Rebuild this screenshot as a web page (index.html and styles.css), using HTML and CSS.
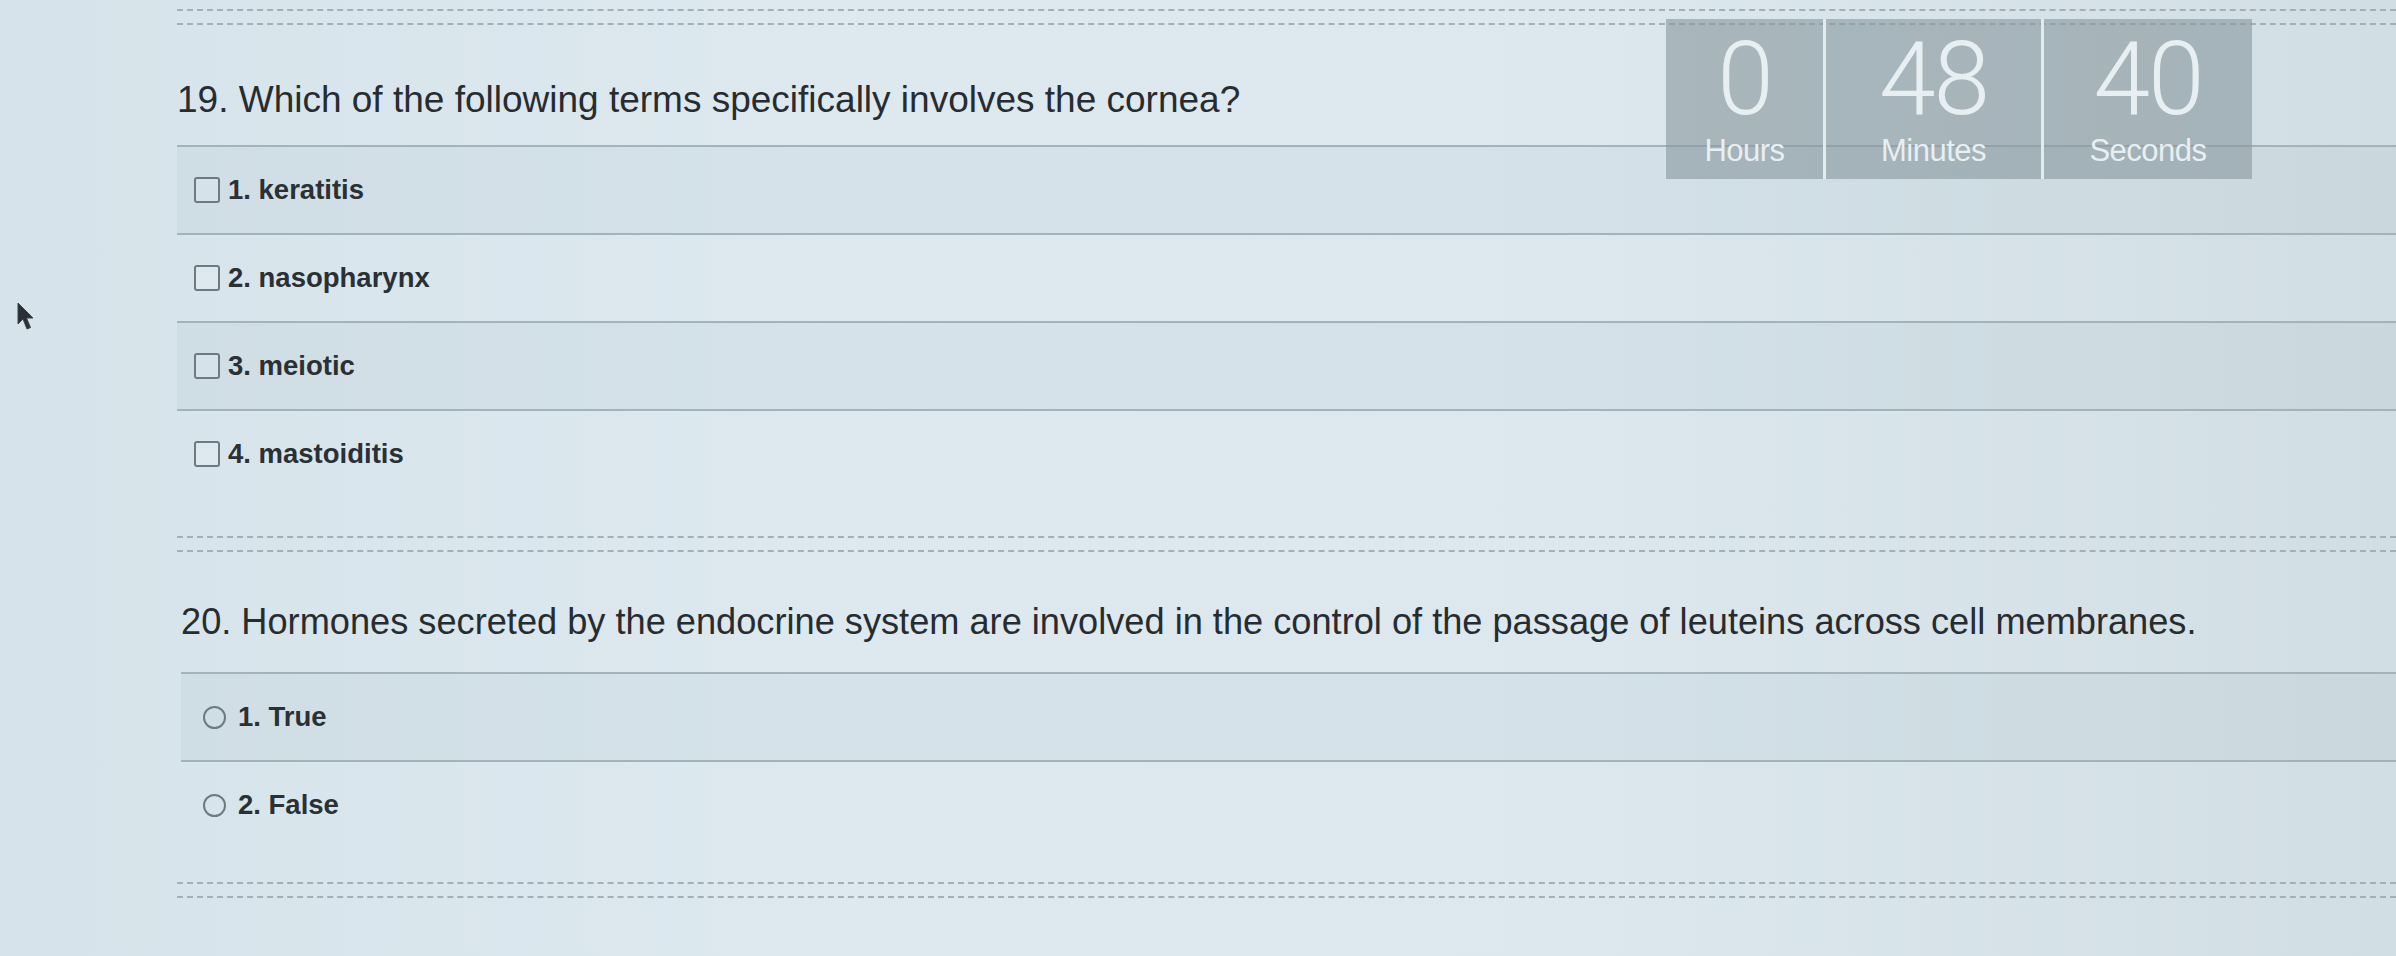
FILE: index.html
```html
<!DOCTYPE html>
<html lang="en">
<head>
<meta charset="utf-8">
<title>Quiz</title>
<link rel="stylesheet" href="styles.css">
</head>
<body>
<main class="quiz">
  <div class="sep"></div>
  <section class="question">
    <h2 class="q-title">19. Which of the following terms specifically involves the cornea?</h2>
    <ul class="options">
      <li class="option shaded"><span class="box"></span>1. keratitis</li>
      <li class="option"><span class="box"></span>2. nasopharynx</li>
      <li class="option shaded"><span class="box"></span>3. meiotic</li>
      <li class="option"><span class="box"></span>4. mastoiditis</li>
    </ul>
  </section>
  <div class="sep"></div>
  <section class="question q-tf">
    <h2 class="q-title">20. Hormones secreted by the endocrine system are involved in the control of the passage of leuteins across cell membranes.</h2>
    <ul class="options">
      <li class="option radio-opt shaded"><span class="radio"></span>1. True</li>
      <li class="option radio-opt"><span class="radio"></span>2. False</li>
    </ul>
  </section>
  <div class="sep"></div>
</main>

<div class="timer">
  <div class="cell cell-h"><span class="num">0</span><span class="lbl">Hours</span></div>
  <div class="cell cell-m"><span class="num">48</span><span class="lbl">Minutes</span></div>
  <div class="cell cell-s"><span class="num">40</span><span class="lbl">Seconds</span></div>
</div>

<svg class="cursor" width="20" height="30" viewBox="0 0 20 30">
  <path d="M1 1 L1 22 L6 17 L10 27 L13.5 25.5 L9.5 16 L16 16 Z" fill="#2a3036" stroke="#3b434a" stroke-width="1"/>
</svg>
</body>
</html>
```

FILE: styles.css
```css
* { box-sizing: border-box; }

html, body {
  margin: 0;
  padding: 0;
}

body {
  width: 2396px;
  height: 956px;
  overflow: hidden;
  background: linear-gradient(90deg, #d6e3ea 0%, #dde9ef 35%, #dce8ee 65%, #d1dee4 100%);
  font-family: "Liberation Sans", Arial, sans-serif;
  color: #2b3034;
  position: relative;
}

.quiz {
  margin-left: 177px;
  padding-top: 9px;
}

.sep {
  height: 16px;
  border-top: 2px dashed #a2b1b8;
  border-bottom: 2px dashed #a2b1b8;
}

.question {
  margin-bottom: 39px;
}

.q-tf {
  margin-bottom: 34px;
  padding-left: 4px;
}

.q-title {
  margin: 0;
  font-size: 37px;
  font-weight: normal;
  line-height: 40px;
  padding-bottom: 25px;
  border-bottom: 2px solid #a3b3ba;
  color: #272c30;
}

.question:first-of-type .q-title {
  padding-top: 55px;
}

.q-tf .q-title {
  font-size: 36.2px;
  padding-top: 50px;
  padding-bottom: 30px;
}

.options {
  list-style: none;
  margin: 0;
  padding: 0;
}

.option {
  height: 88px;
  display: flex;
  align-items: center;
  padding-left: 17px;
  font-size: 27.5px;
  font-weight: bold;
  border-bottom: 2px solid #a3b3ba;
  color: #2a3034;
}

.option:last-child {
  border-bottom: none;
  height: 86px;
}

.option.shaded {
  background: rgba(120, 140, 150, 0.07);
}

.radio-opt {
  padding-left: 22px;
}

.box {
  width: 26px;
  height: 26px;
  border: 2px solid #6f7a80;
  border-radius: 3px;
  margin-right: 8px;
  flex: none;
  background: rgba(255, 255, 255, 0.15);
}

.radio {
  width: 23px;
  height: 23px;
  border: 2px solid #6f7a80;
  border-radius: 50%;
  margin-right: 12px;
  flex: none;
}

.timer {
  position: absolute;
  left: 1666px;
  top: 19px;
  height: 160px;
  display: flex;
}

.cell {
  height: 160px;
  display: flex;
  flex-direction: column;
  align-items: center;
  background: rgba(135, 150, 157, 0.6);
  color: #e8eff2;
  padding-top: 14px;
}

.cell-h { width: 157px; }
.cell-m { width: 218px; border-left: 3px solid #e3ebef; }
.cell-s { width: 211px; border-left: 3px solid #e3ebef; }

.num {
  font-family: Roboto, "Liberation Sans", sans-serif;
  font-weight: 300;
  font-size: 102px;
  line-height: 92px;
  letter-spacing: -2px;
}

.lbl {
  font-family: "Liberation Sans", Arial, sans-serif;
  font-size: 31px;
  line-height: 32px;
  margin-top: 10px;
  letter-spacing: -0.5px;
}

.cursor {
  position: absolute;
  left: 17px;
  top: 302px;
}
```
